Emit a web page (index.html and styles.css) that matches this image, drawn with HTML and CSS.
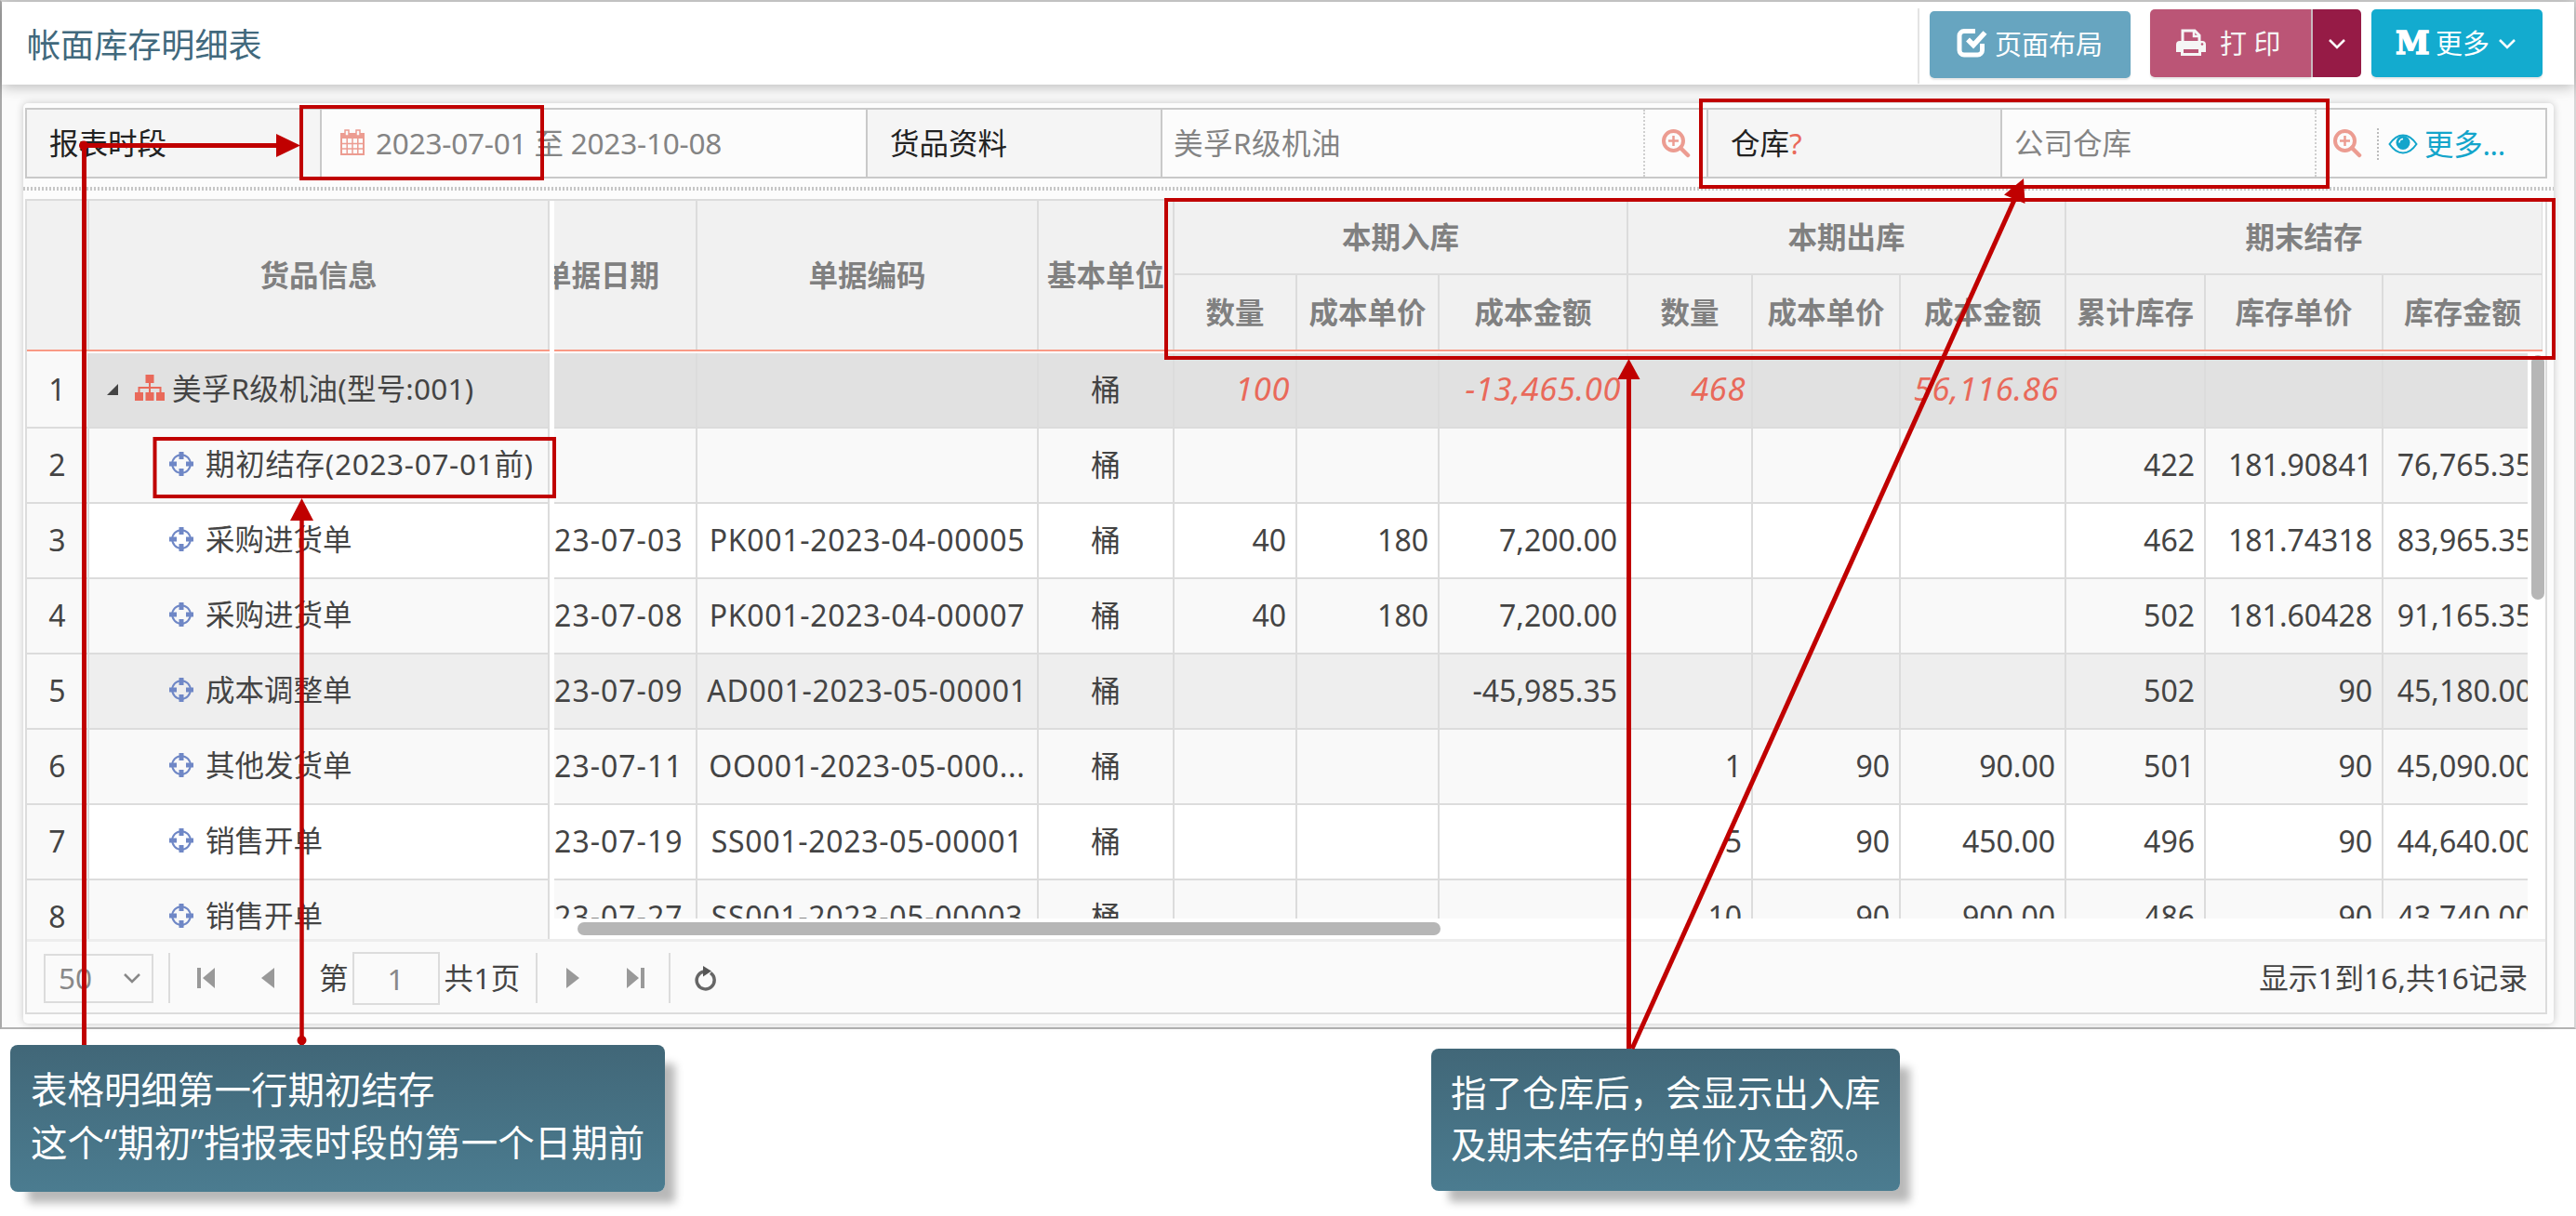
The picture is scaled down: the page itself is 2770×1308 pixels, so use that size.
FILE: index.html
```html
<!DOCTYPE html>
<html lang="zh-CN">

<head>
    <meta charset="UTF-8">
    <title>帐面库存明细表</title>
    <link rel="stylesheet" href="styles.css">
</head>

<body>
    <!-- 图标 -->
    <svg class="defs">
        <symbol id="i-aim" viewBox="0 0 28 28">
            <circle cx="14" cy="14" r="9.800" fill="none" stroke="currentColor" stroke-width="2" />
            <path d="M11.500 1h5v8h-5zM11.500 19h5v8h-5zM1 11.500h8v5H1zM19 11.500h8v5h-8z" fill="currentColor" />
        </symbol>
        <symbol id="i-zoom" viewBox="0 0 32 32">
            <circle cx="13.500" cy="13.500" r="10.500" fill="none" stroke="currentColor" stroke-width="4" />
            <path d="M21 21l8 8" stroke="currentColor" stroke-width="4.500" stroke-linecap="round" />
            <path d="M8 13.500h11M13.500 8v11" stroke="currentColor" stroke-width="2.500" />
        </symbol>
        <symbol id="i-down" viewBox="0 0 20 12">
            <path d="M2 2l8 8 8-8" fill="none" stroke="currentColor" stroke-width="2.500" />
        </symbol>
    </svg>

    <div class="window">
        <div class="header">
            <h1>帐面库存明细表</h1>
            <div class="tools">
                <a class="btn layout">
                    <svg width="33" height="32" viewBox="0 0 33 32">
                        <path d="M27.500 17v7a5 5 0 0 1-5 5H8a5 5 0 0 1-5-5V8.500a5 5 0 0 1 5-5h12" fill="none" stroke="#fff" stroke-width="5" />
                        <path d="M12 12.500l6 6L30.500 5" fill="none" stroke="#fff" stroke-width="5.500" />
                    </svg>
                    <span>页面布局</span>
                </a>
                <div class="print">
                    <a class="btn">
                        <svg width="32" height="29" viewBox="0 0 32 29">
                            <path d="M7 15V2h13l5 5v8" fill="none" stroke="#f5f5f5" stroke-width="3" />
                            <path d="M19 1v7h6" fill="none" stroke="#f5f5f5" stroke-width="2.500" />
                            <path d="M4 13h24a4 4 0 0 1 4 4v8h-5v4H5v-4H0v-8a4 4 0 0 1 4-4z" fill="#f5f5f5" />
                            <path d="M8 22h16v4H8z" fill="#bb5576" />
                            <circle cx="28" cy="16.500" r="1.300" fill="#bb5576" />
                        </svg>
                        <span>打 印</span>
                    </a>
                    <a class="arrow"><svg width="20" height="12"><use href="#i-down" /></svg></a>
                </div>
                <a class="btn more">
                    <b>M</b><span>更多</span>
                    <svg width="20" height="12"><use href="#i-down" /></svg>
                </a>
            </div>
        </div>

        <div class="panel">
            <div class="filter">
                <div class="label">报表时段</div>
                <div class="value date">
                    <svg width="26" height="28" viewBox="0 0 26 28">
                        <path d="M1 5h24v22H1z" fill="none" stroke="currentColor" stroke-width="2" />
                        <path d="M1 4h24v6H1z" fill="currentColor" />
                        <path d="M7.200 10v17M13 10v17M18.800 10v17M1 15.500h24M1 21h24" stroke="currentColor" stroke-width="1.500" />
                        <path d="M5 1h4v6H5zM17 1h4v6h-4z" fill="#fbfbfb" stroke="currentColor" stroke-width="1.500" />
                    </svg>
                    <span>2023-07-01 至 2023-10-08</span>
                </div>
                <div class="label">货品资料</div>
                <div class="value goods">美孚R级机油</div>
                <div class="pick"><svg width="32" height="32"><use href="#i-zoom" /></svg></div>
                <div class="label store">仓库<i>?</i></div>
                <div class="value depot">公司仓库</div>
                <div class="pick last"><svg width="32" height="32"><use href="#i-zoom" /></svg></div>
                <div class="view">
                    <svg width="32" height="22" viewBox="0 0 32 22">
                        <path d="M1.500 11Q8 1.500 16 1.500T30.500 11Q24 20.500 16 20.500T1.500 11z" fill="none" stroke="currentColor" stroke-width="2" />
                        <circle cx="16" cy="9.500" r="7.500" fill="currentColor" />
                        <path d="M12 9.500a4 4 0 0 1 4-4" fill="none" stroke="#fff" stroke-width="1.500" />
                    </svg>
                    <span>更多...</span>
                </div>
            </div>
            <div class="dots"></div>

            <div class="grid">
                <div class="views">
                    <!-- 冻结列 -->
                    <div class="frozen">
                        <table class="head">
                            <colgroup><col class="w-no"><col class="w-name"></colgroup>
                            <tr class="full"><th></th><th>货品信息</th></tr>
                        </table>
                        <div class="body">
                            <table>
                                <colgroup><col class="w-no"><col class="w-name"></colgroup>
                                <tr class="sum">
                                    <td class="no">1</td>
                                    <td class="root">
                                        <div>
                                            <svg width="14" height="14" viewBox="0 0 14 14"><path d="M13 1v12H1z" fill="#444" /></svg>
                                            <svg class="tree" width="32" height="28" viewBox="0 0 32 28">
                                                <path d="M11.500 0h9v9h-9zM0 19h9v9H0zM11.500 19h9v9h-9zM23 19h9v9h-9z" fill="currentColor" />
                                                <path d="M16 8v12M4.500 20v-6h23v6" fill="none" stroke="currentColor" stroke-width="2" />
                                            </svg>
                                            <span>美孚R级机油(型号:001)</span>
                                        </div>
                                    </td>
                                </tr>
                                <tr class="even"><td class="no">2</td><td class="leaf first-leaf"><div><svg width="28" height="28"><use href="#i-aim" /></svg><span>期初结存(2023-07-01前)</span></div></td></tr>
                                <tr><td class="no">3</td><td class="leaf"><div><svg width="28" height="28"><use href="#i-aim" /></svg><span>采购进货单</span></div></td></tr>
                                <tr class="even"><td class="no">4</td><td class="leaf"><div><svg width="28" height="28"><use href="#i-aim" /></svg><span>采购进货单</span></div></td></tr>
                                <tr class="hover"><td class="no">5</td><td class="leaf"><div><svg width="28" height="28"><use href="#i-aim" /></svg><span>成本调整单</span></div></td></tr>
                                <tr class="even"><td class="no">6</td><td class="leaf"><div><svg width="28" height="28"><use href="#i-aim" /></svg><span>其他发货单</span></div></td></tr>
                                <tr><td class="no">7</td><td class="leaf"><div><svg width="28" height="28"><use href="#i-aim" /></svg><span>销售开单</span></div></td></tr>
                                <tr class="even"><td class="no">8</td><td class="leaf"><div><svg width="28" height="28"><use href="#i-aim" /></svg><span>销售开单</span></div></td></tr>
                            </table>
                        </div>
                    </div>

                    <!-- 滚动列 -->
                    <div class="scroll">
                        <div class="head-wrap">
                            <table class="head wide">
                                <colgroup><col class="w1"><col class="w2"><col class="w3"><col class="w4"><col class="w5"><col class="w6"><col class="w7"><col class="w8"><col class="w9"><col class="w10"><col class="w11"><col class="w12"></colgroup>
                                <tr>
                                    <th rowspan="2">单据日期</th>
                                    <th rowspan="2">单据编码</th>
                                    <th rowspan="2">基本单位</th>
                                    <th colspan="3" class="group">本期入库</th>
                                    <th colspan="3" class="group">本期出库</th>
                                    <th colspan="3" class="group">期末结存</th>
                                </tr>
                                <tr>
                                    <th>数量</th><th>成本单价</th><th>成本金额</th>
                                    <th>数量</th><th>成本单价</th><th>成本金额</th>
                                    <th>累计库存</th><th>库存单价</th><th>库存金额</th>
                                </tr>
                            </table>
                        </div>
                        <div class="body-wrap">
                            <div class="body">
                                <table class="wide">
                                    <colgroup><col class="w1"><col class="w2"><col class="w3"><col class="w4"><col class="w5"><col class="w6"><col class="w7"><col class="w8"><col class="w9"><col class="w10"><col class="w11"><col class="w12"></colgroup>
                                    <tr class="sum"><td></td><td></td><td>桶</td><td>100</td><td></td><td>-13,465.00</td><td>468</td><td></td><td>56,116.86</td><td></td><td></td><td></td></tr>
                                    <tr class="even"><td></td><td></td><td>桶</td><td></td><td></td><td></td><td></td><td></td><td></td><td>422</td><td>181.90841</td><td>76,765.35</td></tr>
                                    <tr><td>2023-07-03</td><td>PK001-2023-04-00005</td><td>桶</td><td>40</td><td>180</td><td>7,200.00</td><td></td><td></td><td></td><td>462</td><td>181.74318</td><td>83,965.35</td></tr>
                                    <tr class="even"><td>2023-07-08</td><td>PK001-2023-04-00007</td><td>桶</td><td>40</td><td>180</td><td>7,200.00</td><td></td><td></td><td></td><td>502</td><td>181.60428</td><td>91,165.35</td></tr>
                                    <tr class="hover"><td>2023-07-09</td><td>AD001-2023-05-00001</td><td>桶</td><td></td><td></td><td>-45,985.35</td><td></td><td></td><td></td><td>502</td><td>90</td><td>45,180.00</td></tr>
                                    <tr class="even"><td>2023-07-11</td><td>OO001-2023-05-000...</td><td>桶</td><td></td><td></td><td></td><td>1</td><td>90</td><td>90.00</td><td>501</td><td>90</td><td>45,090.00</td></tr>
                                    <tr><td>2023-07-19</td><td>SS001-2023-05-00001</td><td>桶</td><td></td><td></td><td></td><td>5</td><td>90</td><td>450.00</td><td>496</td><td>90</td><td>44,640.00</td></tr>
                                    <tr class="even"><td>2023-07-27</td><td>SS001-2023-05-00003</td><td>桶</td><td></td><td></td><td></td><td>10</td><td>90</td><td>900.00</td><td>486</td><td>90</td><td>43,740.00</td></tr>
                                </table>
                            </div>
                            <div class="vbar"><div></div></div>
                        </div>
                        <div class="hbar"><div></div></div>
                    </div>
                </div>

                <div class="pager">
                    <div class="size"><span>50</span><svg width="20" height="12"><use href="#i-down" /></svg></div>
                    <div class="sep"></div>
                    <svg class="first" width="20" height="22"><path d="M0 0h4v22H0zM19 0v22L6 11z" /></svg>
                    <svg class="prev" width="14" height="22"><path d="M14 0v22L0 11z" /></svg>
                    <span>第</span>
                    <div class="num">1</div>
                    <span class="pages">共1页</span>
                    <div class="sep s2"></div>
                    <svg class="next" width="14" height="22"><path d="M0 0v22l14-11z" /></svg>
                    <svg class="end" width="20" height="22"><path d="M16 0h4v22h-4zM1 0v22l13-11z" /></svg>
                    <div class="sep s3"></div>
                    <svg class="reload" width="24" height="28" viewBox="0 0 24 28">
                        <path d="M17 8.500a9.500 9.500 0 1 1-7-1.500" fill="none" stroke="#666" stroke-width="3.500" />
                        <path d="M9 1l9 5.500-9 6z" class="tip" />
                    </svg>
                    <span class="total">显示1到16,共16记录</span>
                </div>
            </div>
        </div>
    </div>

    <div class="note note-left">表格明细第一行期初结存<br>这个“期初”指报表时段的第一个日期前</div>
    <div class="note note-right">指了仓库后，会显示出入库<br>及期末结存的单价及金额。</div>

    <!-- 标注框和箭头 -->
    <svg class="marks" width="2770" height="1308" viewBox="0 0 2770 1308">
        <g fill="none" stroke="#c00000" stroke-width="4">
            <rect x="324" y="115" width="259" height="77" />
            <rect x="1829" y="108" width="674" height="93" />
            <rect x="1254" y="215" width="1492" height="170" />
            <rect x="166.500" y="472" width="429.500" height="62" />
            <path d="M90.500 1124V156.500H300" stroke-width="5" />
            <path d="M324.500 1124V556" stroke-width="4.500" />
            <path d="M1751.500 1128V404" stroke-width="5" />
            <path d="M1755 1128L2167 213" stroke-width="5" />
        </g>
        <g fill="#c00000">
            <circle cx="90" cy="156.500" r="5" />
            <circle cx="324.500" cy="1119" r="5" />
            <path d="M297 144v25l26-12.500z" />
            <path d="M312 560h25l-12.500-24z" />
            <path d="M1739.500 408h24l-12-22z" />
            <path d="M2155 209.500l22.500 9.500-1.500-27z" />
        </g>
    </svg>
</body>

</html>
```
FILE: styles.css
```css
* {
    padding: 0;
    margin: 0;
    box-sizing: border-box;
}

body {
    width: 2770px;
    height: 1308px;
    overflow: hidden;
    position: relative;
    background-color: #fff;
    color: #444;
    font: 31.5px/1.3 "Noto Sans", "Noto Sans CJK SC", sans-serif;
    white-space: nowrap;
}

i {
    font-style: normal;
}

svg {
    display: block;
    flex: none;
}

.defs {
    display: none;
}

.window {
    height: 1107px;
    border: 2px solid #d6d6d6;
    border-left-color: #a9a9a9;
    border-bottom-color: #b3b3b3;
    background-color: #fbfbfb;
}

/* 顶部 */
.header {
    display: flex;
    justify-content: space-between;
    height: 89px;
    padding-left: 27px;
    background-color: #fff;
    box-shadow: 0 2px 14px rgba(0, 0, 0, .28);
}

.header h1 {
    font-size: 36.1px;
    font-weight: normal;
    line-height: 92px;
    color: #41697d;
}

.tools {
    display: flex;
    align-items: flex-start;
    margin-top: 7px;
    height: 81px;
    padding: 1px 34px 0 11px;
    border-left: 2px solid #e4e4e4;
    color: #fff;
    font-size: 29px;
}

.btn {
    display: flex;
    align-items: center;
    height: 73px;
    border-radius: 5px;
    box-shadow: 0 2px 2px rgba(0, 0, 0, .1);
}

.layout {
    width: 216px;
    height: 72px;
    margin-top: 2px;
    padding-left: 29px;
    background-color: #67a5c0;
}

.layout svg {
    margin: -4px 8px 0 0;
}

.print {
    display: flex;
    margin: 0 11px 0 21px;
}

.print .btn {
    width: 173px;
    padding-left: 28px;
    background-color: #bb5576;
    border-radius: 5px 0 0 5px;
    color: #f5f5f5;
}

.print .btn svg {
    margin: -3px 15px 0 0;
}

.arrow {
    display: flex;
    align-items: center;
    justify-content: center;
    width: 54px;
    height: 73px;
    border-left: 2px solid #c9b8be;
    border-radius: 0 5px 5px 0;
    background-color: #961b46;
}

.more {
    width: 184px;
    padding-left: 26px;
    background-color: #13abcf;
}

.more b {
    width: 43px;
    font: bold 33px/73px "DejaVu Serif", serif;
    -webkit-text-stroke: 1.5px #fff;
}

.more svg {
    margin-left: 9px;
}

/* 查询条件 */
.panel {
    width: 2721px;
    height: 990px;
    margin: 20px 0 0 23px;
    padding-top: 5px;
    border-radius: 5px;
    background-color: #fcfcfc;
    box-shadow: 0 0 8px rgba(0, 0, 0, .22);
}

.filter {
    display: flex;
    width: 2712px;
    height: 76px;
    margin-left: 2px;
    border: 2px solid #c9c9c9;
    line-height: 72px;
}

.label {
    width: 317px;
    padding-left: 24px;
    border-right: 2px solid #c9c9c9;
    background-color: #f5f5f5;
    color: #222;
}

.label i {
    color: #e9695a;
}

.value {
    color: #848484;
}

.date {
    display: flex;
    align-items: center;
    width: 587px;
    padding-left: 20px;
    border-right: 2px solid #c9c9c9;
    letter-spacing: -.2px;
}

.date svg {
    margin: -3px 12px 0 0;
    color: #ec9c91;
}

.goods {
    width: 517px;
    padding-left: 12px;
    letter-spacing: .5px;
}

.depot {
    width: 336px;
    padding-left: 13px;
}

.pick {
    display: flex;
    align-items: center;
    width: 70px;
    padding-left: 17px;
    border-left: 2px dotted #cfcfcf;
    border-right: 2px solid #c9c9c9;
    color: #ec9c91;
}

.pick.last {
    width: 67px;
    border-right: 0;
}

.store {
    width: 316px;
}

.view {
    display: flex;
    align-items: center;
    height: 34px;
    margin-top: 20px;
    padding-left: 10px;
    border-left: 2px dotted #bbb;
    color: #13a5cb;
    letter-spacing: -.3px;
}

.view svg {
    margin-right: 7px;
}

.dots {
    height: 4px;
    margin-top: 9px;
    background: repeating-linear-gradient(90deg, #c6c6c6 0, #c6c6c6 2px, transparent 2px, transparent 4px);
}

/* 表格 */
.grid {
    width: 2712px;
    height: 877px;
    margin: 9px 0 0 2px;
    border: 2px solid #dcdcdc;
    background-color: #fff;
}

.views {
    display: flex;
    height: 794px;
}

table {
    table-layout: fixed;
    border-collapse: separate;
    border-spacing: 0;
}

.frozen {
    width: 562px;
    overflow: hidden;
}

.frozen table {
    width: 562px;
}

.frozen .body {
    height: 632px;
    overflow: hidden;
}

.scroll {
    width: 2141px;
    margin-left: 5px;
    overflow: hidden;
}

.wide {
    width: 2191px;
    margin-left: -52px;
}

.head-wrap {
    width: 2138px;
    overflow: hidden;
}

.w-no { width: 67px; }
.w-name { width: 495px; }
.w1 { width: 206px; }
.w2 { width: 367px; }
.w3 { width: 146px; }
.w4 { width: 132px; }
.w5 { width: 153px; }
.w6 { width: 203px; }
.w7 { width: 134px; }
.w8 { width: 159px; }
.w9 { width: 178px; }
.w10 { width: 150px; }
.w11 { width: 191px; }
.w12 { width: 172px; }

.head {
    height: 162px;
    background-color: #f1f1f1;
    border-bottom: 2px solid #f99a85;
}

.head th {
    height: 80px;
    border-right: 2px solid #dcdcdc;
    color: #808080;
    font-weight: bold;
}

.head .group {
    border-bottom: 2px solid #dcdcdc;
}

.head .full th {
    height: 160px;
}

.body {
    padding-top: 2px;
}

td {
    height: 81px;
    padding-bottom: 2px;
    border-right: 2px solid #dcdcdc;
    border-bottom: 2px solid #dcdcdc;
    overflow: hidden;
}

.even td,
td.no {
    background-color: #f9f9f9;
}

.hover td {
    background-color: #eee;
}

.sum td {
    background-color: #e1e1e1;
}

tr td.no {
    background-color: #f9f9f9;
    text-align: center;
    font-size: 32px;
}

td div {
    display: flex;
    align-items: center;
}

.root {
    padding-left: 18px;
    letter-spacing: .2px;
}

.tree {
    margin: -3px 8px 0 17px;
    color: #e9695a;
}

.leaf {
    padding-left: 85px;
}

.leaf svg {
    margin: -1px 12px 0 0;
    color: #6f87c6;
}

.first-leaf {
    letter-spacing: .7px;
}

.wide td {
    padding-right: 10px;
    font-size: 32px;
    text-align: right;
}

.wide td:nth-child(-n+3) {
    padding: 0 0 2px;
    text-align: center;
}

.wide td:nth-child(1) {
    letter-spacing: 1px;
}

.wide td:nth-child(2) {
    letter-spacing: .7px;
}

.wide .sum td:nth-child(n+4) {
    padding-right: 6px;
    color: #e9695a;
    font-size: 34.5px;
    font-style: italic;
    letter-spacing: .6px;
}

.body-wrap {
    display: flex;
    height: 610px;
}

.body-wrap .body {
    width: 2122px;
    overflow: hidden;
}

.vbar {
    width: 19px;
    padding: 4px 0 0 4px;
}

.vbar div {
    width: 14px;
    height: 263px;
    border-radius: 7px;
    background-color: #b6b6b6;
}

.hbar {
    padding: 4px 0 0 25px;
}

.hbar div {
    width: 928px;
    height: 14px;
    border-radius: 7px;
    background-color: #b6b6b6;
}

/* 分页 */
.pager {
    display: flex;
    align-items: center;
    height: 79px;
    padding: 2px 19px 0 18px;
    border-top: 3px solid #ededed;
    background-color: #fafafa;
}

.pager svg {
    fill: #999;
}

.size {
    display: flex;
    align-items: center;
    justify-content: space-between;
    width: 118px;
    height: 53px;
    padding: 0 11px 0 14px;
    border: 2px solid #dcdcdc;
    color: #888;
}

.sep {
    width: 2px;
    height: 54px;
    margin: 0 29px 0 16px;
    background-color: #dcdcdc;
}

.prev {
    margin: 0 48px 0 49px;
}

.num {
    width: 94px;
    height: 57px;
    margin: 0 5px 0 4px;
    border: 2px solid #dcdcdc;
    color: #888;
    line-height: 53px;
    text-align: center;
}

.pages {
    letter-spacing: .4px;
}

.s2 {
    margin-right: 31px;
}

.end {
    margin-left: 50px;
}

.s3 {
    margin: 0 26px;
}

.pager .tip {
    fill: #555;
}

.total {
    margin-left: auto;
    letter-spacing: .1px;
}

/* 说明 */
.note {
    position: absolute;
    border-radius: 8px;
    background: linear-gradient(#416778, #4b7c90);
    box-shadow: 15px 16px 10px -4px rgba(0, 0, 0, .28);
    color: #fff;
}

.note-left {
    left: 11px;
    top: 1124px;
    width: 704px;
    height: 158px;
    padding: 20px 0 0 22px;
    font-size: 39.5px;
    line-height: 57px;
}

.note-right {
    left: 1539px;
    top: 1128px;
    width: 504px;
    height: 153px;
    padding: 19px 0 0 21px;
    font-size: 38.5px;
    line-height: 56px;
}

.marks {
    position: absolute;
    left: 0;
    top: 0;
}
```
